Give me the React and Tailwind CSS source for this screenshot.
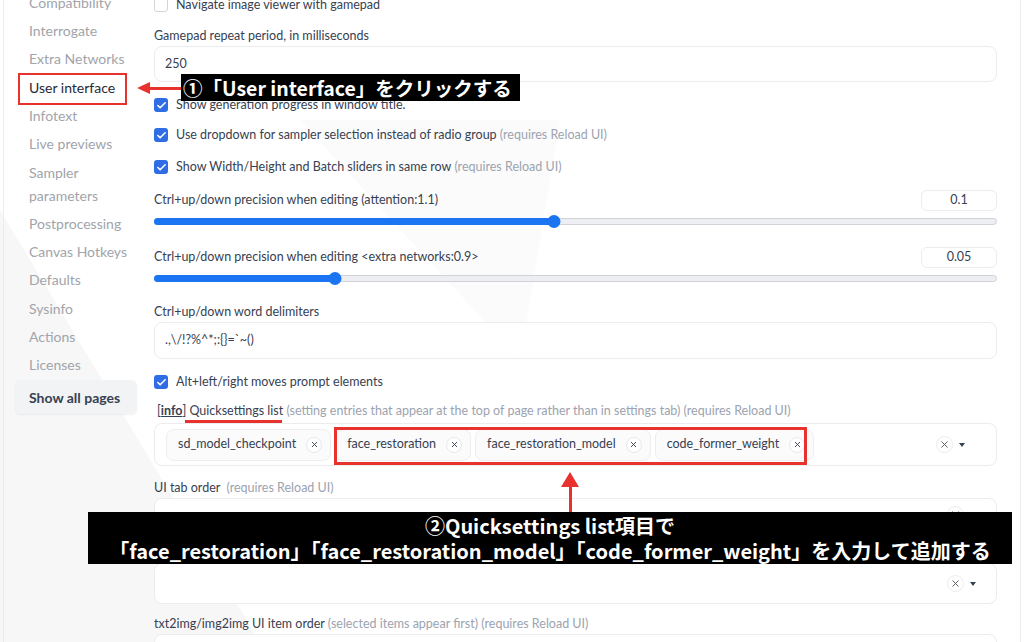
import { Check, X } from 'lucide-react';

const navItems = ['Compatibility', 'Interrogate', 'Extra Networks', 'User interface', 'Infotext', 'Live previews', 'Sampler parameters', 'Postprocessing', 'Canvas Hotkeys', 'Defaults', 'Sysinfo', 'Actions', 'Licenses'];

function Checkbox({ checked, children, className = '' }) {
  return (
    <label className={`flex h-[20px] items-center gap-[8px] ${className}`}>
      {checked
        ? <span className="flex h-[14px] w-[14px] shrink-0 items-center justify-center rounded-[3px] bg-[#2e6de4]"><Check className="h-[11px] w-[11px] text-white" strokeWidth={3.5} /></span>
        : <span className="h-[14px] w-[14px] shrink-0 rounded-[3px] border border-[#d4d4d8] bg-white" />}
      <span>{children}</span>
    </label>
  );
}

function Slider({ pct }) {
  return (
    <div className="relative mt-[3px] flex h-[14px] items-center">
      <div className="h-[7px] w-full rounded-full border border-[#cfd2d6] bg-[#eceef1]" />
      <div className="absolute left-0 h-[7px] rounded-full bg-[#1b74f2]" style={{ width: `${pct}%` }} />
      <div className="absolute h-[13px] w-[13px] -translate-x-1/2 rounded-full bg-[#1b74f2]" style={{ left: `${pct}%` }} />
    </div>
  );
}

function Token({ label }) {
  return (
    <span className="flex h-[32px] shrink-0 items-center gap-[10px] rounded-lg border border-[#eceef1] bg-[#fbfbfc] pl-[11px] pr-[8px]">
      {label}
      <span className="flex h-[16px] w-[16px] items-center justify-center rounded-full border border-[#e8e8ea] bg-white"><X className="h-[9px] w-[9px] text-[#374151]" strokeWidth={2.5} /></span>
    </span>
  );
}

function SelectEnd() {
  return (
    <div className="ml-auto flex items-center gap-[6px] pr-[20px]">
      <span className="flex h-[17px] w-[17px] items-center justify-center rounded-full border border-[#ececee] bg-white"><X className="h-[11px] w-[11px] text-[#4b5563]" strokeWidth={2} /></span>
      <span className="h-0 w-0 border-x-[3.5px] border-t-[4px] border-x-transparent border-t-[#374151]" />
    </div>
  );
}

export default function App() {
  return (
    <div className="relative h-[642px] w-[1024px] overflow-hidden bg-white text-[12.5px] text-[#374151]" style={{ fontFamily: 'Lato, "Noto Sans", sans-serif' }}>
      <svg className="absolute inset-0" width="1024" height="642" aria-hidden="true">
        <polygon points="0,210 260,642 0,642" fill="#f7f7f8" />
        <polygon points="300,120 560,120 520,360" fill="#fbfbfb" />
      </svg>
      <div className="relative mx-[3px] flex h-full border-x border-[#ececee]">
        <aside className="w-[150px] shrink-0 pl-[11px]">
          <ul className="-mt-[12px] text-[14px] text-[#a1a4aa]">
            {navItems.map((item) => (
              <li key={item} className={`px-[14px] py-[2.67px] leading-[23px] ${item === 'User interface' ? 'text-[#1f2937]' : ''}`}>{item === 'Sampler parameters' ? <>Sampler<br />parameters</> : item}</li>
            ))}
          </ul>
          <button type="button" className="mt-[1px] h-[34px] w-[122px] rounded-md bg-[#f2f3f5] px-[14px] text-left text-[14px] font-bold text-[#374151] shadow-[0_1px_2px_rgba(0,0,0,0.06)]">Show all pages</button>
        </aside>
        <main className="min-w-0 flex-1 pr-[23px]">
          <Checkbox className="-mt-[5px]">Navigate image viewer with gamepad</Checkbox>
          <div className="mt-[11px] leading-[20px]">Gamepad repeat period, in milliseconds</div>
          <div className="flex h-[36px] items-center rounded-lg border border-[#ececee] bg-white px-[10px]">250</div>
          <Checkbox checked className="mt-[13px]">Show generation progress in window title.</Checkbox>
          <Checkbox checked className="mt-[10px]">Use dropdown for sampler selection instead of radio group <span className="text-[#9ca3af]">(requires Reload UI)</span></Checkbox>
          <Checkbox checked className="mt-[12px]">Show Width/Height and Batch sliders in same row <span className="text-[#9ca3af]">(requires Reload UI)</span></Checkbox>
          <div className="mt-[13px] flex h-[21px] items-center justify-between">
            <span>Ctrl+up/down precision when editing (attention:1.1)</span>
            <span className="flex h-[21px] w-[76px] items-center justify-center rounded-md border border-[#ececee] bg-white">0.1</span>
          </div>
          <Slider pct={47.5} />
          <div className="mt-[19px] flex h-[21px] items-center justify-between">
            <span>Ctrl+up/down precision when editing &lt;extra networks:0.9&gt;</span>
            <span className="flex h-[21px] w-[76px] items-center justify-center rounded-md border border-[#ececee] bg-white">0.05</span>
          </div>
          <Slider pct={21.5} />
          <div className="mt-[17px] leading-[20px]">Ctrl+up/down word delimiters</div>
          <div className="flex h-[37px] items-center rounded-lg border border-[#ececee] bg-white px-[10px]">.,\/!?%^*;:{'{}'}=`~()</div>
          <Checkbox checked className="mt-[13px]">Alt+left/right moves prompt elements</Checkbox>
          <div className="mt-[9px] pl-[3px] leading-[20px]">[<span className="font-bold underline">info</span>] Quicksettings list <span className="text-[#9ca3af]">(setting entries that appear at the top of page rather than in settings tab) (requires Reload UI)</span></div>
          <div className="mt-[2px] flex h-[43px] items-center gap-[4px] rounded-lg border border-[#ececee] bg-white px-[11px]">
            <Token label="sd_model_checkpoint" />
            <Token label="face_restoration" />
            <Token label="face_restoration_model" />
            <Token label="code_former_weight" />
            <SelectEnd />
          </div>
          <div className="mt-[12px] leading-[20px]">UI tab order <span className="text-[#9ca3af]">&nbsp;(requires Reload UI)</span></div>
          <div className="flex h-[32px] items-center rounded-lg border border-[#ececee] bg-white"><SelectEnd /></div>
          <div className="mt-[11px] leading-[20px]">Hidden UI tabs <span className="text-[#9ca3af]">(requires Reload UI)</span></div>
          <div className="mt-[2px] flex h-[41px] items-center rounded-lg border border-[#ececee] bg-white"><SelectEnd /></div>
          <div className="mt-[10px] leading-[20px]">txt2img/img2img UI item order <span className="text-[#9ca3af]">(selected items appear first) (requires Reload UI)</span></div>
          <div className="flex h-[44px] items-center rounded-lg border border-[#ececee] bg-white"><SelectEnd /></div>
        </main>
      </div>

      {/* annotation 1 */}
      <div className="absolute left-[18px] top-[73px] h-[32px] w-[109px] border-[2.5px] border-[#e8322e]" />
      <div className="absolute left-[147px] top-[87px] h-[3px] w-[36px] bg-[#e8322e]" />
      <div className="absolute left-[137px] top-[82px] h-0 w-0 border-y-[6.5px] border-r-[13px] border-y-transparent border-r-[#e8322e]" />
      <div className="absolute left-[181px] top-[74px] flex h-[27px] w-[339px] items-center whitespace-nowrap bg-black pl-[2px] text-[19.5px] font-bold leading-none text-white" style={{ fontFamily: '"Noto Sans CJK JP", sans-serif' }}>①「User interface」をクリックする</div>

      {/* annotation 2 */}
      <div className="absolute left-[185px] top-[420px] h-[2.5px] w-[97px] bg-[#e8322e]" />
      <div className="absolute left-[334px] top-[427px] h-[38px] w-[473px] border-[3px] border-[#e8322e]" />
      <div className="absolute left-[569px] top-[485px] h-[28px] w-[3px] bg-[#e8322e]" />
      <div className="absolute left-[561px] top-[472px] h-0 w-0 border-x-[9.5px] border-b-[15px] border-x-transparent border-b-[#e8322e]" />
      <div className="absolute left-[88px] top-[512px] flex h-[52px] w-[924px] flex-col items-center justify-center whitespace-nowrap bg-black text-[20px] font-bold leading-[25px] text-white" style={{ fontFamily: '"Noto Sans CJK JP", sans-serif' }}>
        <span>②Quicksettings list項目で</span>
        <span>「face_restoration」「face_restoration_model」「code_former_weight」を入力して追加する</span>
      </div>
    </div>
  );
}
